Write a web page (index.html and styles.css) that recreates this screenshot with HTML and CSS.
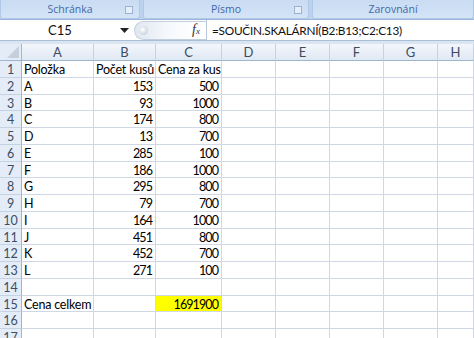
FILE: index.html
```html
<!DOCTYPE html>
<html>
<head>
<meta charset="utf-8">
<link rel="stylesheet" href="styles.css">
</head>
<body>
<div class="ribbon">
  <div class="group g1"><span class="glabel">Schránka</span><span class="launch"></span></div>
  <div class="group g2"><span class="glabel">Písmo</span><span class="launch"></span></div>
  <div class="group g3"><span class="glabel">Zarovnání</span></div>
</div>
<div class="fbar">
  <div class="namebox">C15</div>
  <div class="arrow"><svg width="9" height="5" viewBox="0 0 9 5"><path d="M0 0H9L4.5 5Z" fill="#222"/></svg></div>
  <div class="orn"><span class="knob"></span><span class="fx"><i>f</i><small>x</small></span></div>
  <div class="formula">=SOUČIN.SKALÁRNÍ(B2:B13;C2:C13)</div>
</div>
<div class="gap"></div>
<div class="sheet">
  <div class="corner"><svg width="12" height="12" viewBox="0 0 12 12"><path d="M12 0V12H0Z" fill="#c4cfdd"/></svg></div>
  <div class="ch">A</div><div class="ch">B</div><div class="ch">C</div><div class="ch">D</div><div class="ch">E</div><div class="ch">F</div><div class="ch">G</div><div class="ch">H</div>

  <div class="rh">1</div><div class="c">Položka</div><div class="c">Počet kusů</div><div class="c">Cena za kus</div><div class="c"></div><div class="c"></div><div class="c"></div><div class="c"></div><div class="c"></div>
  <div class="rh">2</div><div class="c">A</div><div class="c n">153</div><div class="c n">500</div><div class="c"></div><div class="c"></div><div class="c"></div><div class="c"></div><div class="c"></div>
  <div class="rh">3</div><div class="c">B</div><div class="c n">93</div><div class="c n">1000</div><div class="c"></div><div class="c"></div><div class="c"></div><div class="c"></div><div class="c"></div>
  <div class="rh">4</div><div class="c">C</div><div class="c n">174</div><div class="c n">800</div><div class="c"></div><div class="c"></div><div class="c"></div><div class="c"></div><div class="c"></div>
  <div class="rh">5</div><div class="c">D</div><div class="c n">13</div><div class="c n">700</div><div class="c"></div><div class="c"></div><div class="c"></div><div class="c"></div><div class="c"></div>
  <div class="rh">6</div><div class="c">E</div><div class="c n">285</div><div class="c n">100</div><div class="c"></div><div class="c"></div><div class="c"></div><div class="c"></div><div class="c"></div>
  <div class="rh">7</div><div class="c">F</div><div class="c n">186</div><div class="c n">1000</div><div class="c"></div><div class="c"></div><div class="c"></div><div class="c"></div><div class="c"></div>
  <div class="rh">8</div><div class="c">G</div><div class="c n">295</div><div class="c n">800</div><div class="c"></div><div class="c"></div><div class="c"></div><div class="c"></div><div class="c"></div>
  <div class="rh">9</div><div class="c">H</div><div class="c n">79</div><div class="c n">700</div><div class="c"></div><div class="c"></div><div class="c"></div><div class="c"></div><div class="c"></div>
  <div class="rh">10</div><div class="c">I</div><div class="c n">164</div><div class="c n">1000</div><div class="c"></div><div class="c"></div><div class="c"></div><div class="c"></div><div class="c"></div>
  <div class="rh">11</div><div class="c">J</div><div class="c n">451</div><div class="c n">800</div><div class="c"></div><div class="c"></div><div class="c"></div><div class="c"></div><div class="c"></div>
  <div class="rh">12</div><div class="c">K</div><div class="c n">452</div><div class="c n">700</div><div class="c"></div><div class="c"></div><div class="c"></div><div class="c"></div><div class="c"></div>
  <div class="rh">13</div><div class="c">L</div><div class="c n">271</div><div class="c n">100</div><div class="c"></div><div class="c"></div><div class="c"></div><div class="c"></div><div class="c"></div>
  <div class="rh">14</div><div class="c"></div><div class="c"></div><div class="c"></div><div class="c"></div><div class="c"></div><div class="c"></div><div class="c"></div><div class="c"></div>
  <div class="rh">15</div><div class="c">Cena celkem</div><div class="c"></div><div class="c n yellow">1691900</div><div class="c"></div><div class="c"></div><div class="c"></div><div class="c"></div><div class="c"></div>
  <div class="rh">16</div><div class="c"></div><div class="c"></div><div class="c"></div><div class="c"></div><div class="c"></div><div class="c"></div><div class="c"></div><div class="c"></div>
  <div class="rh last">17</div><div class="c"></div><div class="c"></div><div class="c"></div><div class="c"></div><div class="c"></div><div class="c"></div><div class="c"></div><div class="c"></div>
</div>
</body>
</html>
```
FILE: styles.css
```css
html, body {
  margin: 0;
  padding: 0;
  width: 474px;
  height: 338px;
  overflow: hidden;
  background: #fff;
  font-family: Lato, "Open Sans", sans-serif;
}
.ribbon {
  height: 20px;
  display: flex;
  gap: 3px;
  background: #bcd2ee;
  border-bottom: 1px solid #9ab6da;
  box-sizing: border-box;
}
.group {
  position: relative;
  display: flex;
  align-items: center;
  justify-content: center;
  background: linear-gradient(#c9dcf3, #d4e4f7);
  border: 1px solid #b0c8e6;
  border-top: none;
  border-radius: 0 0 3px 3px;
  box-sizing: border-box;
  height: 19px;
}
.g1 { width: 140px; }
.g2 { width: 166px; }
.g3 { flex: 1; }
.glabel {
  font-family: "Open Sans", sans-serif;
  font-size: 10.5px;
  color: #3f69a8;
}
.launch {
  position: absolute;
  right: 6px;
  top: 6px;
  width: 6px;
  height: 6px;
  border: 1px solid #9db2cc;
  background: #e6eefa;
}
.fbar {
  height: 21px;
  display: flex;
  align-items: center;
  background: #fff;
  border-bottom: 1px solid #a9bfd6;
  box-sizing: border-box;
}
.namebox {
  width: 120px;
  text-align: center;
  font-family: Lato, sans-serif;
  font-size: 13px;
  color: #111;
}
.arrow {
  width: 12px;
  display: flex;
  align-items: center;
}
.orn {
  width: 72px;
  height: 19px;
  display: flex;
  align-items: center;
  justify-content: space-between;
  background: linear-gradient(90deg, #dfe7f1 0, #f4f7fb 30px, #fff 60px);
  border-radius: 10px 0 0 10px;
  border: 1px solid #c3cfdd;
  border-right: none;
  box-sizing: border-box;
  margin-left: 2px;
  padding-right: 6px;
}
.knob {
  width: 9px;
  height: 9px;
  border-radius: 50%;
  margin-left: 4px;
  background: radial-gradient(circle at 40% 40%, #fff, #b9c4d0);
}
.fx {
  font-family: "Liberation Serif", serif;
  font-size: 14px;
  color: #333;
}
.fx small { font-size: 9px; font-style: italic; }
.formula {
  flex: 1;
  height: 100%;
  display: flex;
  align-items: center;
  padding-left: 5px;
  border-left: 1px solid #b7c6d8;
  font-family: Lato, sans-serif;
  font-size: 11.8px;
  letter-spacing: -0.25px;
  color: #111;
  white-space: nowrap;
}
.gap {
  height: 3px;
  background: #dbe5f2;
}
.sheet {
  display: grid;
  grid-template-columns: 22px 72px 62px 66px 54px 54px 54px 54px 36px;
  grid-template-rows: 17px repeat(17, 16.75px);
  font-family: Lato, sans-serif;
  font-size: 12.5px;
  color: #000;
}
.corner {
  background: #e4ecf7;
  border-right: 1px solid #9eb6ce;
  border-bottom: 1px solid #9eb6ce;
  display: flex;
  align-items: flex-end;
  justify-content: flex-end;
  padding: 0 2px 2px 0;
  box-sizing: border-box;
}
.ch {
  background: linear-gradient(#f3f7fc, #e0e8f3);
  border-right: 1px solid #c5d2e2;
  border-bottom: 1px solid #9eb6ce;
  text-align: center;
  line-height: 16px;
  color: #3d4c63;
  font-size: 13px;
  box-sizing: border-box;
}
.rh {
  background: #e4ecf7;
  border-right: 1px solid #9eb6ce;
  border-bottom: 1px solid #c5d2e2;
  text-align: center;
  line-height: 17px;
  color: #3d4c63;
  font-size: 12.5px;
  box-sizing: border-box;
  overflow: hidden;
}
.rh.last { line-height: 18px; }
.c {
  border-right: 1px solid #d0d7e5;
  border-bottom: 1px solid #d0d7e5;
  box-sizing: border-box;
  padding: 0 2px;
  line-height: 17px;
  letter-spacing: -0.2px;
  white-space: nowrap;
  overflow: visible;
}
.n { text-align: right; letter-spacing: -0.9px; padding-right: 3px; }
.yellow { background: #ffff00; }
```
